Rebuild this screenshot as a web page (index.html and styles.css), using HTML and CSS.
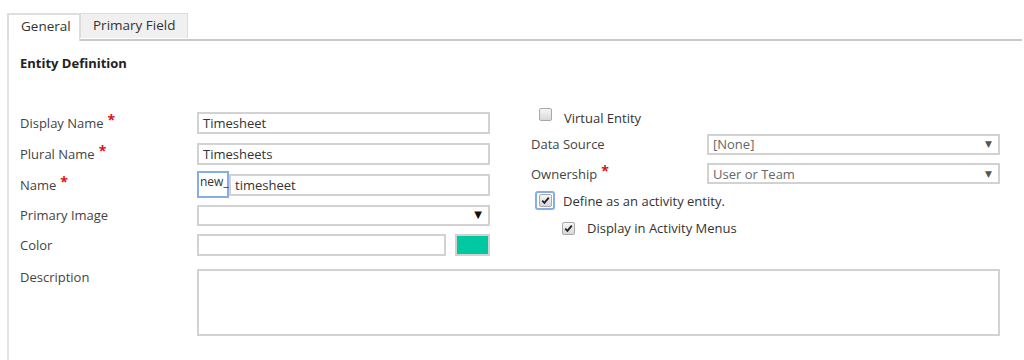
FILE: index.html
```html
<!doctype html>
<html lang="en">

<head>
  <meta charset="UTF-8" />
  <meta name="viewport" content="width=device-width, initial-scale=1.0" />
  <title>Entity Definition</title>
  <link rel="stylesheet" href="styles.css">
</head>

<body>
  <div class="tabs">
    <div class="tab tab-active">General</div>
    <div class="tab">Primary Field</div>
  </div>

  <div class="panel">
    <h1 class="section-title">Entity Definition</h1>

    <div class="form">
      <!-- left column -->
      <div class="col col-left">
        <div class="row">
          <label class="label">Display Name<span class="req">*</span></label>
          <div class="input">Timesheet</div>
        </div>
        <div class="row">
          <label class="label">Plural Name<span class="req">*</span></label>
          <div class="input">Timesheets</div>
        </div>
        <div class="row">
          <label class="label">Name<span class="req">*</span></label>
          <div class="name-field">
            <div class="prefix">new_</div>
            <div class="input input-grow">timesheet</div>
          </div>
        </div>
        <div class="row">
          <label class="label">Primary Image</label>
          <div class="input select"><span></span><span class="arrow arrow-dark">&#9660;</span></div>
        </div>
        <div class="row">
          <label class="label">Color</label>
          <div class="color-field">
            <div class="input input-grow"></div>
            <div class="swatch"></div>
          </div>
        </div>
      </div>

      <!-- right column -->
      <div class="col col-right">
        <div class="row row-virtual">
          <span class="check check-virtual"></span>
          <span class="check-label">Virtual Entity</span>
        </div>
        <div class="row">
          <label class="label">Data Source</label>
          <div class="input select muted"><span>[None]</span><span class="arrow">&#9660;</span></div>
        </div>
        <div class="row">
          <label class="label">Ownership<span class="req">*</span></label>
          <div class="input select muted"><span>User or Team</span><span class="arrow">&#9660;</span></div>
        </div>
        <div class="row row-define">
          <span class="focus-ring">
            <span class="check">
              <svg width="11" height="11" viewBox="0 0 11 11"><path d="M2.2 5.6 L4.4 7.8 L8.8 2.6" fill="none" stroke="#222" stroke-width="1.9"/></svg>
            </span>
          </span>
          <span class="check-label">Define as an activity entity.</span>
        </div>
        <div class="row row-display">
          <span class="check">
            <svg width="11" height="11" viewBox="0 0 11 11"><path d="M2.2 5.6 L4.4 7.8 L8.8 2.6" fill="none" stroke="#222" stroke-width="1.9"/></svg>
          </span>
          <span class="check-label">Display in Activity Menus</span>
        </div>
      </div>
    </div>

    <div class="desc-row">
      <label class="label">Description</label>
      <div class="textarea"></div>
    </div>
  </div>
</body>

</html>
```

FILE: styles.css
```css
body {
  font-family: "Open Sans", Arial, sans-serif;
  font-size: 13px;
  margin: 0;
  padding: 13px 0 0 7px;
  background-color: #fff;
  color: #444;
}

.tabs {
  display: flex;
  margin-right: 2px;
  border-bottom: 2px solid #cacaca;
}

.tab {
  height: 24px;
  line-height: 23px;
  padding: 0 12px;
  font-size: 13.5px;
  color: #333;
  background-color: #f0f0f0;
  border: 1px solid #dcdcdc;
  border-bottom: none;
}

.tab-active {
  width: 46px;
  height: 26px;
  padding: 0 12px;
  margin-bottom: -2px;
  background-color: #fff;
  border: 2px solid #dedede;
  border-bottom: none;
  border-right: 1px solid #dedede;
}

.panel {
  border-left: 2px solid #e4e4e4;
  padding: 13px 0 26px 11px;
}

.section-title {
  margin: 0 0 29px;
  font-size: 13px;
  line-height: 18px;
  font-weight: bold;
  color: #222;
}

.form {
  display: flex;
  gap: 41px;
}

.col {
  display: flex;
  flex-direction: column;
}

.col-left {
  width: 470px;
  padding-top: 7px;
}

.col-left .row:nth-child(1) { height: 30px; }
.col-left .row:nth-child(2) { height: 31px; }
.col-left .row:nth-child(3) { height: 31px; }
.col-left .row:nth-child(4) { height: 30px; }
.col-left .row:nth-child(5) { height: 29px; }

.col-right {
  width: 469px;
  padding-top: 5px;
}

.col-right .row:nth-child(1) { height: 23px; }
.col-right .row:nth-child(2) { height: 30px; }
.col-right .row:nth-child(3) { height: 29px; }
.col-right .row:nth-child(4) { height: 25px; }
.col-right .row:nth-child(5) { height: 30px; }

.row {
  display: flex;
  align-items: center;
}

.label {
  width: 177px;
  flex-shrink: 0;
  line-height: 18px;
  color: #444;
}

.col-right .label {
  width: 176px;
}

.req {
  color: #e01010;
  font-weight: bold;
  font-size: 14px;
  line-height: 0;
  margin-left: 4px;
  vertical-align: 3px;
}

.input {
  box-sizing: border-box;
  width: 293px;
  height: 22px;
  line-height: 18px;
  padding: 0 4px;
  border: 2px solid #d2d2d2;
  color: #333;
  background-color: #fff;
}

.input-grow {
  width: auto;
  flex: 1;
}

.select {
  display: flex;
  justify-content: space-between;
  align-items: center;
  height: 21px;
  padding-right: 6px;
}

.muted {
  color: #666;
}

.arrow {
  font-family: "DejaVu Sans", sans-serif;
  font-size: 9px;
  color: #555;
}

.arrow-dark {
  color: #111;
  font-size: 10px;
}

.name-field,
.color-field {
  display: flex;
  align-items: center;
  width: 293px;
}

.prefix {
  box-sizing: border-box;
  width: 32px;
  height: 27px;
  padding: 0 1px;
  line-height: 17px;
  font-size: 12px;
  color: #333;
  border: 2px solid #86ade4;
  margin-top: -1px;
}

.color-field {
  gap: 9px;
}

.swatch {
  box-sizing: border-box;
  width: 35px;
  height: 22px;
  background-color: #00c8a0;
  border: 2px solid #d2d2d2;
}

.check {
  box-sizing: border-box;
  display: inline-flex;
  align-items: center;
  justify-content: center;
  width: 13px;
  height: 13px;
  border: 1px solid #a8a8a8;
  border-radius: 2px;
  background: linear-gradient(#f6f6f6, #d8d8d8);
  flex-shrink: 0;
}

.check-label {
  line-height: 18px;
  color: #333;
}

.check-virtual {
  align-self: flex-start;
  margin: 2px 12px 0 8px;
}

.focus-ring {
  box-sizing: border-box;
  display: inline-flex;
  align-items: center;
  justify-content: center;
  width: 20px;
  height: 19px;
  margin: 0 8px 0 4px;
  border: 2px solid #86ade4;
  border-radius: 3px;
}

.row-display .check {
  margin: 0 12px 0 31px;
}

.desc-row {
  display: flex;
  margin-top: 10px;
}

.desc-row .label {
  margin-top: -1px;
}

.textarea {
  box-sizing: border-box;
  width: 803px;
  height: 67px;
  border: 2px solid #d2d2d2;
}
```
